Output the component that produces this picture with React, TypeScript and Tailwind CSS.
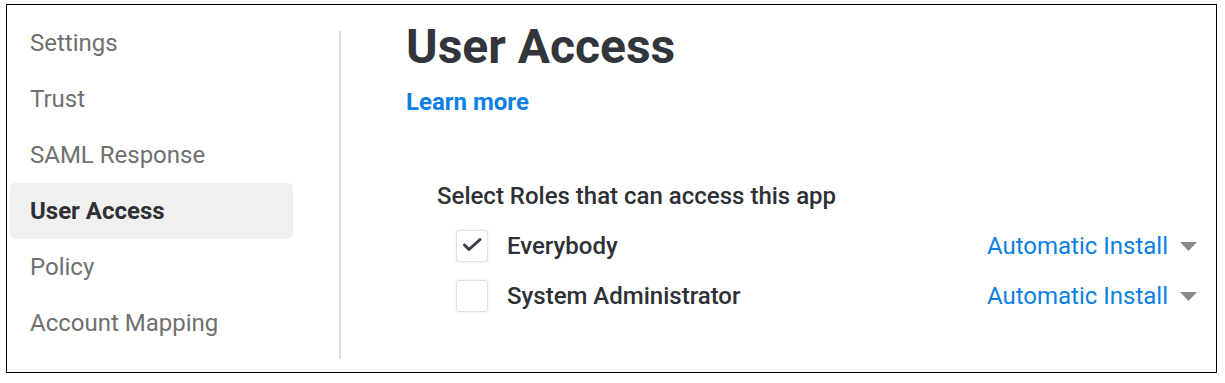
const navItems = ['Settings', 'Trust', 'SAML Response', 'User Access', 'Policy', 'Account Mapping'];

const roles = [
  { name: 'Everybody', checked: true },
  { name: 'System Administrator', checked: false },
];

export default function App() {
  return (
    <div className="w-[1225px] h-[383px] bg-white pt-[4px] pl-[6px] font-['Roboto',sans-serif]">
      <div className="w-[1211px] h-[369px] border border-black flex">
        {/* sidebar */}
        <div className="w-[334px] pl-[3px] pt-[10px] flex">
          <nav className="w-[283px] flex flex-col">
            {navItems.map((item) => {
              const active = item === 'User Access';
              return (
                <div
                  key={item}
                  className={
                    active
                      ? 'h-[56px] flex items-center pl-[20px] rounded-[5px] bg-[#f0f0f0] text-[24px] font-bold text-[#2e3036]'
                      : 'h-[56px] flex items-center pl-[20px] text-[24px] text-[#707070]'
                  }
                >
                  {item}
                </div>
              );
            })}
          </nav>
          <div className="ml-auto mt-[16px] mb-[13px] w-[2px] bg-[#dcdcdc]" />
        </div>

        {/* main */}
        <div className="flex-1 pl-[65px] pr-[19px]">
          <h1 className="mt-[14px] text-[48px] leading-[56px] font-bold text-[#32353b]">User Access</h1>
          <a href="#" className="block mt-[13px] text-[24px] leading-[28px] font-bold text-[#0b7fe3]">
            Learn more
          </a>
          <div className="mt-[66px] pl-[31px]">
            <div className="text-[24px] leading-[28px] font-medium text-[#2e3036]">
              Select Roles that can access this app
            </div>
            <div className="mt-[21px] flex flex-col gap-[20px]">
              {roles.map((role) => (
                <div key={role.name} className="h-[30px] flex items-center">
                  <div className="ml-[20px] w-[30px] h-[30px] rounded-[2px] bg-white shadow-[0_0_0_1px_#e2e2e2,0_0_3px_1px_rgba(0,0,0,0.10)]">
                    {role.checked && (
                      <svg width="30" height="30" viewBox="0 0 30 30">
                        <path
                          d="M7.5 14 L12 18.5 L23 8.5"
                          fill="none"
                          stroke="#3a3d44"
                          strokeWidth="3"
                          strokeLinecap="round"
                          strokeLinejoin="round"
                        />
                      </svg>
                    )}
                  </div>
                  <span className="ml-[20px] text-[24px] font-medium text-[#2e3036]">{role.name}</span>
                  <div className="ml-auto flex items-center gap-[12px]">
                    <span className="text-[24px] text-[#0b7fe3]">Automatic Install</span>
                    <svg width="17" height="9" viewBox="0 0 17 9">
                      <path d="M0 0 L17 0 L8.5 9 Z" fill="#8a8a8a" />
                    </svg>
                  </div>
                </div>
              ))}
            </div>
          </div>
        </div>
      </div>
    </div>
  );
}
